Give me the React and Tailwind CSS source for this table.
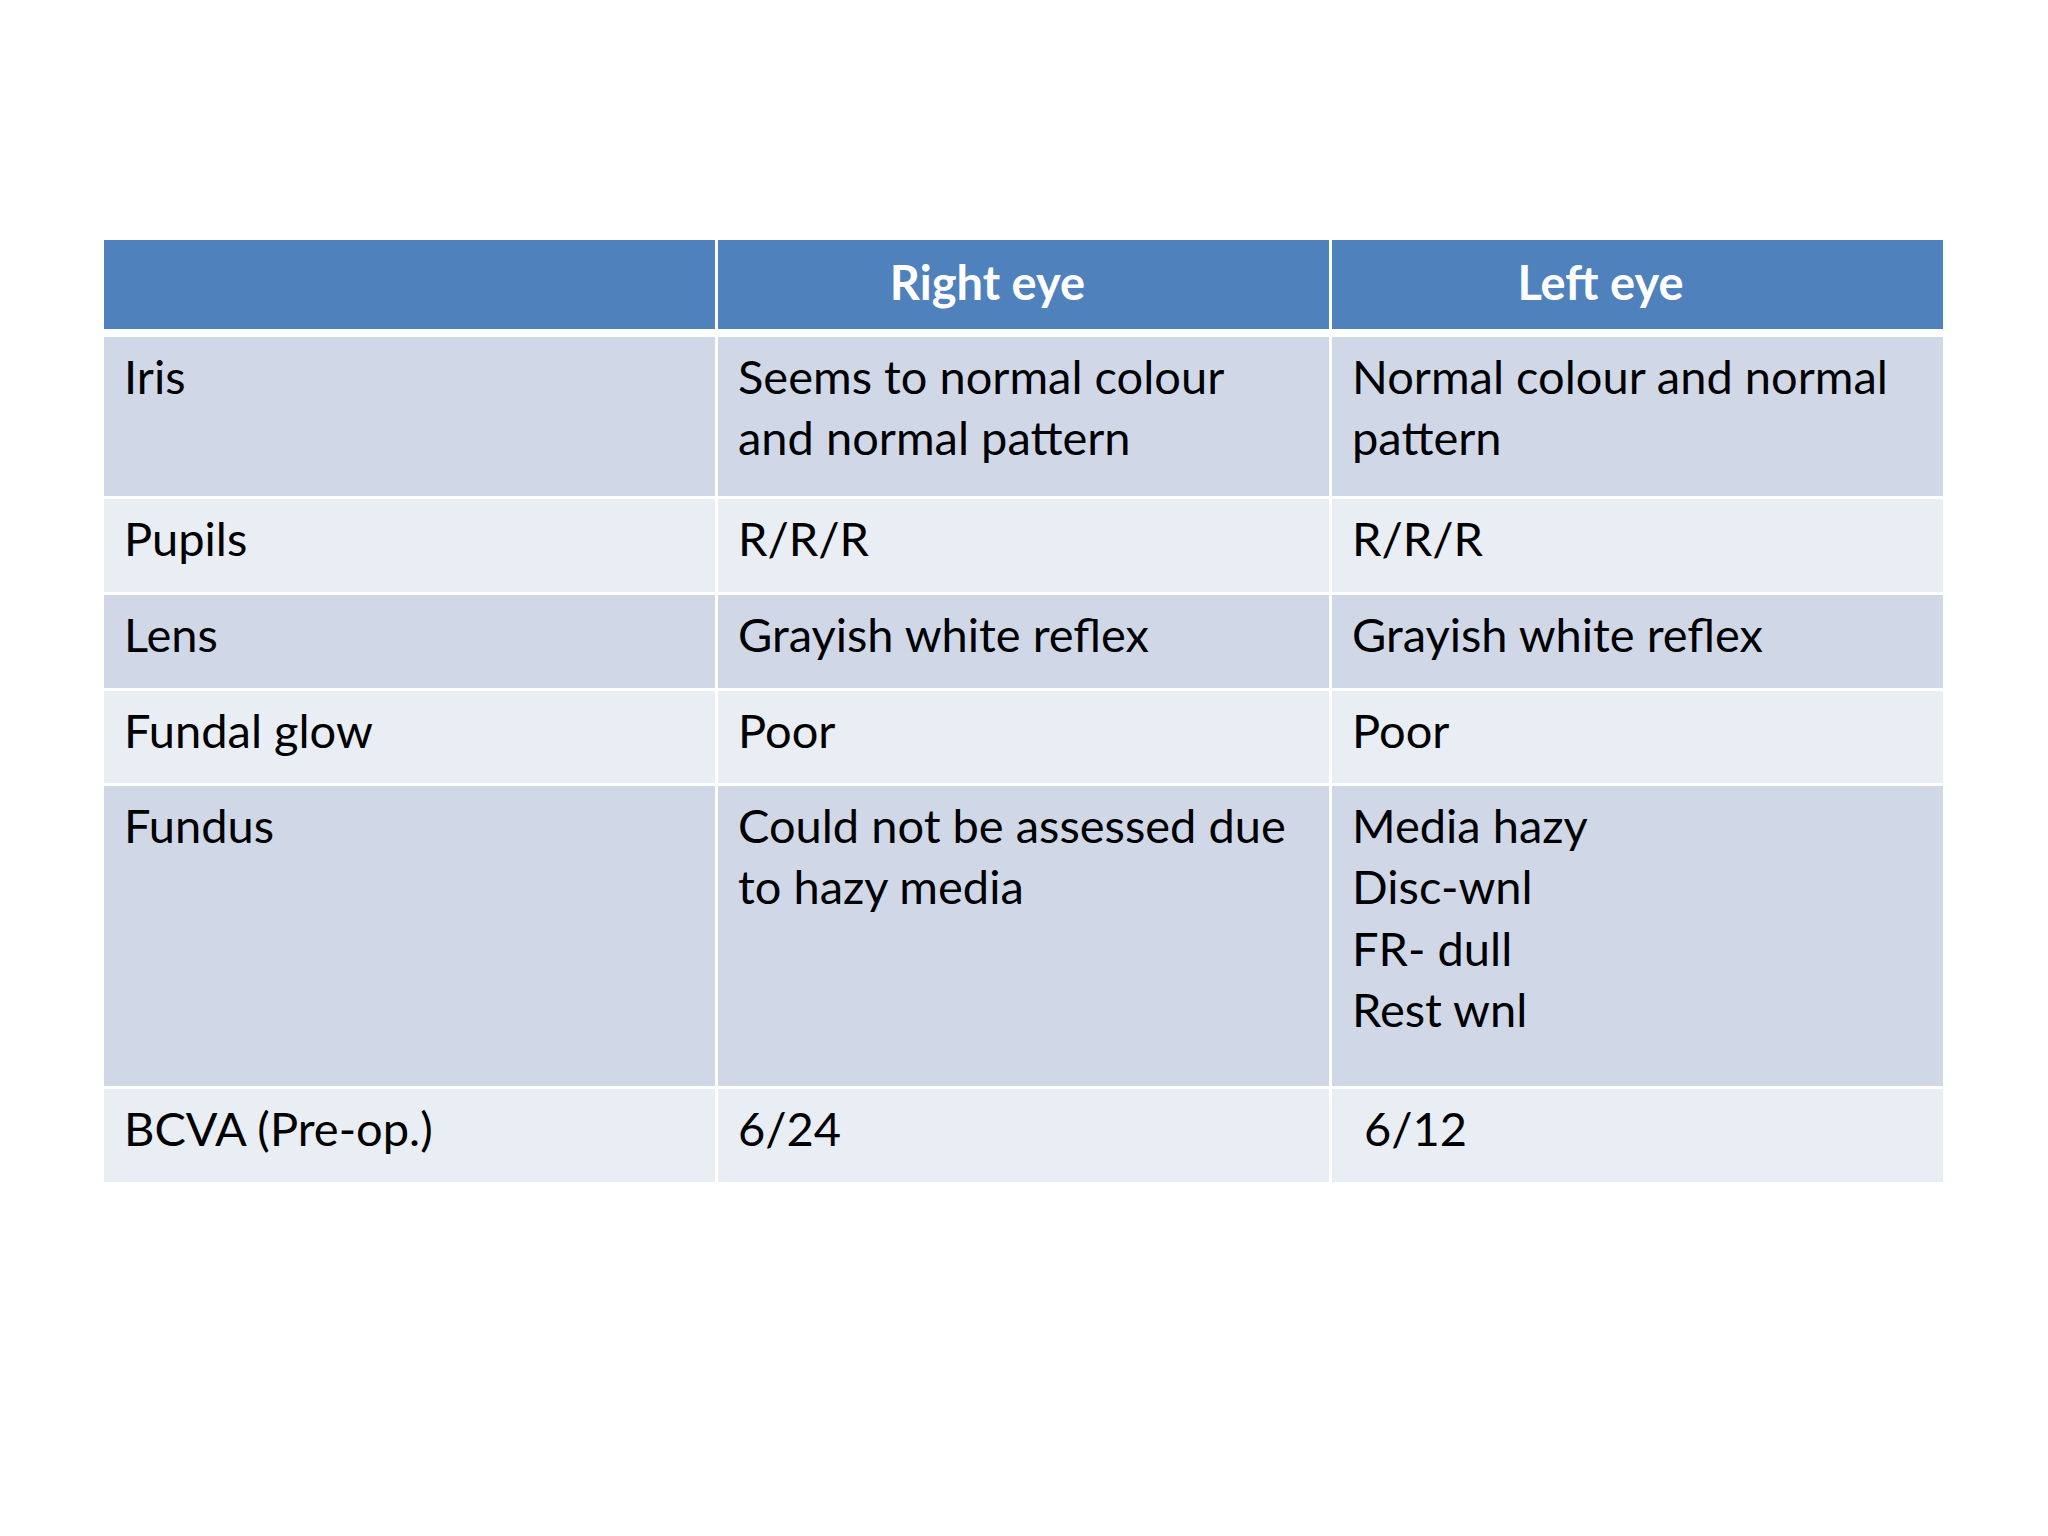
import React from 'react';

const rows = [
  { label: 'Iris', right: ['Seems to normal colour', 'and normal pattern'], left: ['Normal colour and normal', 'pattern'], h: 'h-[159px]', bg: 'bg-[#d0d8e8]' },
  { label: 'Pupils', right: ['R/R/R'], left: ['R/R/R'], h: 'h-[93px]', bg: 'bg-[#e9edf4]' },
  { label: 'Lens', right: ['Grayish white reflex'], left: ['Grayish white reflex'], h: 'h-[93px]', bg: 'bg-[#d0d8e8]' },
  { label: 'Fundal glow', right: ['Poor'], left: ['Poor'], h: 'h-[92px]', bg: 'bg-[#e9edf4]' },
  { label: 'Fundus', right: ['Could not be assessed due', 'to hazy media'], left: ['Media hazy', 'Disc-wnl', 'FR- dull', 'Rest wnl'], h: 'h-[300px]', bg: 'bg-[#d0d8e8]' },
  { label: 'BCVA (Pre-op.)', right: ['6/24'], left: ['\u00a06/12'], h: 'h-[93px]', bg: 'bg-[#e9edf4]' },
];

const Cell = ({ lines, bg }) => (
  <div className={`${bg} pl-[20px] pt-[9px] text-[47px] leading-[61.4px] text-black whitespace-pre`}>
    {lines.map((l, i) => (
      <div key={i}>{l}</div>
    ))}
  </div>
);

const App = () => {
  return (
    <div className="w-[2048px] h-[1536px] bg-white pt-[240px] pl-[104px] font-['Lato',sans-serif]">
      <div className="w-[1839px] flex flex-col">
        {/* header */}
        <div className="grid grid-cols-3 gap-[3px] h-[89px] mb-[8px]">
          <div className="bg-[#4f81bd]" />
          <div className="bg-[#4f81bd] flex items-center justify-center pr-[72px] pb-[5px] text-white font-bold text-[47px]">Right eye</div>
          <div className="bg-[#4f81bd] flex items-center justify-center pr-[74px] pb-[5px] text-white font-bold text-[47px]">Left eye</div>
        </div>
        {/* body */}
        <div className="flex flex-col gap-[3px]">
          {rows.map((r) => (
            <div key={r.label} className={`grid grid-cols-3 gap-[3px] ${r.h}`}>
              <Cell lines={[r.label]} bg={r.bg} />
              <Cell lines={r.right} bg={r.bg} />
              <Cell lines={r.left} bg={r.bg} />
            </div>
          ))}
        </div>
      </div>
    </div>
  );
};

export default App;
